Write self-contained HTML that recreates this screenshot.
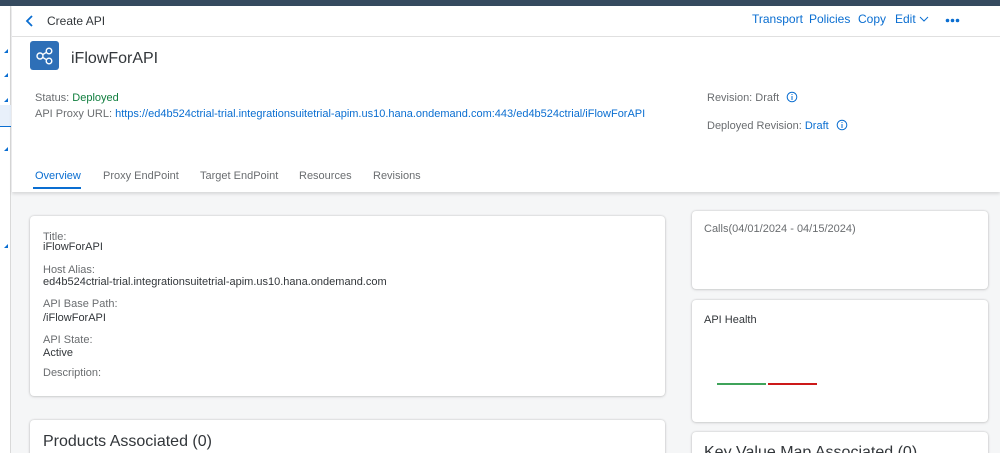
<!DOCTYPE html>
<html style="width:1000px;height:453px;overflow:hidden"><head><meta charset="utf-8"><style>
*{margin:0;padding:0;box-sizing:border-box}
body{width:1000px;height:453px;overflow:hidden;background:#f5f6f7;font-family:"Liberation Sans",Arial,sans-serif;position:relative;color:#32363a}
.a{position:absolute;white-space:nowrap}
.top{left:0;top:0;width:1000px;height:6px;background:#354a5f}
.side{left:0;top:6px;width:11px;height:447px;background:#fff;border-right:1px solid #d9d9d9}
.head{left:12px;top:6px;width:988px;height:186px;background:#fff;box-shadow:0 2px 3px rgba(0,0,0,.12)}
.blue{color:#0a6ed1}
.card{position:absolute;background:#fff;border-radius:4px;box-shadow:0 0 2px rgba(0,0,0,.2),0 1px 3px rgba(0,0,0,.1)}
.lbl{font-size:11px;color:#6a6d70}
.val{font-size:11px;color:#32363a}
.tri{position:absolute;left:4px;width:0;height:0;border-left:4px solid transparent;border-bottom:4px solid #0a6ed1}
.info{display:inline-block;vertical-align:-2px;margin-left:7px}
</style></head><body>
<div class="a top"></div>
<div class="a side"></div>
<div class="tri" style="top:49px"></div><div class="tri" style="top:73px"></div><div class="tri" style="top:98px"></div><div class="tri" style="top:123px"></div><div class="tri" style="top:147px"></div><div class="tri" style="top:244px"></div>
<div class="a" style="left:0;top:105px;width:11px;height:22px;background:#e8f0fa;border-bottom:1px solid #0a6ed1"></div>
<div class="a head"></div>
<div class="a" style="left:12px;top:36px;width:988px;height:1px;background:#e0e0e0"></div>
<svg class="a" style="left:25px;top:14px" width="10" height="14"><path d="M7 2 L2 7 L7 12" stroke="#0a6ed1" stroke-width="1.8" fill="none"/></svg>
<div class="a" style="left:47px;top:14px;font-size:12px;color:#32363a">Create API</div>
<div class="a blue" style="left:752px;top:12px;font-size:12px">Transport</div>
<div class="a blue" style="left:809px;top:12px;font-size:12px">Policies</div>
<div class="a blue" style="left:858px;top:12px;font-size:12px">Copy</div>
<div class="a blue" style="left:895px;top:12px;font-size:12px">Edit</div>
<svg class="a" style="left:919px;top:16px" width="10" height="6"><path d="M1 1 L5 5 L9 1" stroke="#0a6ed1" fill="none"/></svg>
<svg class="a" style="left:945px;top:18px" width="16" height="5"><circle cx="2.5" cy="2.5" r="1.8" fill="#0a6ed1"/><circle cx="7.5" cy="2.5" r="1.8" fill="#0a6ed1"/><circle cx="12.5" cy="2.5" r="1.8" fill="#0a6ed1"/></svg>
<div class="a" style="left:30px;top:41px;width:29px;height:29px;background:#2e6fb7;border-radius:3px"></div>
<svg class="a" style="left:30px;top:41px" width="29" height="29"><g stroke="#fff" stroke-width="1.4" fill="none"><circle cx="10" cy="15" r="3"/><circle cx="19" cy="10" r="2.8"/><circle cx="19" cy="20" r="2.8"/><path d="M12.6 13.6 L16.5 11.3 M12.6 16.4 L16.5 18.7"/></g></svg>
<div class="a" style="left:71px;top:50px;font-size:16px;color:#32363a">iFlowForAPI</div>
<div class="a" style="left:35px;top:92px;font-size:11px;color:#6a6d70">Status: <span style="color:#107e3e">Deployed</span></div>
<div class="a" style="left:35px;top:108px;font-size:11px;color:#6a6d70">API Proxy URL: <span class="blue">https://ed4b524ctrial-trial.integrationsuitetrial-apim.us10.hana.ondemand.com:443/ed4b524ctrial/iFlowForAPI</span></div>
<div class="a" style="left:707px;top:91px;font-size:11px;color:#6a6d70">Revision: Draft<svg class="info" width="12" height="12"><circle cx="6" cy="6" r="4.8" stroke="#0a6ed1" fill="none"/><path d="M6 5v4M6 3v1" stroke="#0a6ed1"/></svg></div>
<div class="a" style="left:707px;top:119px;font-size:11px;color:#6a6d70">Deployed Revision: <span class="blue">Draft</span><svg class="info" width="12" height="12"><circle cx="6" cy="6" r="4.8" stroke="#0a6ed1" fill="none"/><path d="M6 5v4M6 3v1" stroke="#0a6ed1"/></svg></div>
<div class="a blue" style="left:35px;top:170px;font-size:11px">Overview</div>
<div class="a" style="left:33px;top:187px;width:48px;height:2px;background:#0a6ed1"></div>
<div class="a" style="left:103px;top:170px;font-size:11px;color:#6a6d70">Proxy EndPoint</div>
<div class="a" style="left:200px;top:170px;font-size:11px;color:#6a6d70">Target EndPoint</div>
<div class="a" style="left:299px;top:170px;font-size:11px;color:#6a6d70">Resources</div>
<div class="a" style="left:373px;top:170px;font-size:11px;color:#6a6d70">Revisions</div>
<div class="card" style="left:30px;top:216px;width:635px;height:180px"></div>
<div class="a lbl" style="left:43px;top:231px">Title:</div><div class="a val" style="left:43px;top:241px">iFlowForAPI</div>
<div class="a lbl" style="left:43px;top:264px">Host Alias:</div><div class="a val" style="left:43px;top:276px">ed4b524ctrial-trial.integrationsuitetrial-apim.us10.hana.ondemand.com</div>
<div class="a lbl" style="left:43px;top:298px">API Base Path:</div><div class="a val" style="left:43px;top:312px">/iFlowForAPI</div>
<div class="a lbl" style="left:43px;top:334px">API State:</div><div class="a val" style="left:43px;top:347px">Active</div>
<div class="a lbl" style="left:43px;top:367px">Description:</div>
<div class="card" style="left:30px;top:420px;width:635px;height:50px"></div>
<div class="a" style="left:43px;top:433px;font-size:16px;color:#32363a">Products Associated (0)</div>
<div class="card" style="left:692px;top:211px;width:296px;height:78px"></div>
<div class="a lbl" style="left:704px;top:223px">Calls(04/01/2024 - 04/15/2024)</div>
<div class="card" style="left:692px;top:300px;width:296px;height:122px"></div>
<div class="a val" style="left:704px;top:314px">API Health</div>
<div class="a" style="left:717px;top:383px;width:49px;height:2px;background:#3fa35a"></div>
<div class="a" style="left:768px;top:383px;width:49px;height:2px;background:#cc1919"></div>
<div class="card" style="left:692px;top:432px;width:296px;height:40px"></div>
<div class="a" style="left:704px;top:444px;font-size:16px;color:#32363a">Key Value Map Associated (0)</div>
</body></html>
